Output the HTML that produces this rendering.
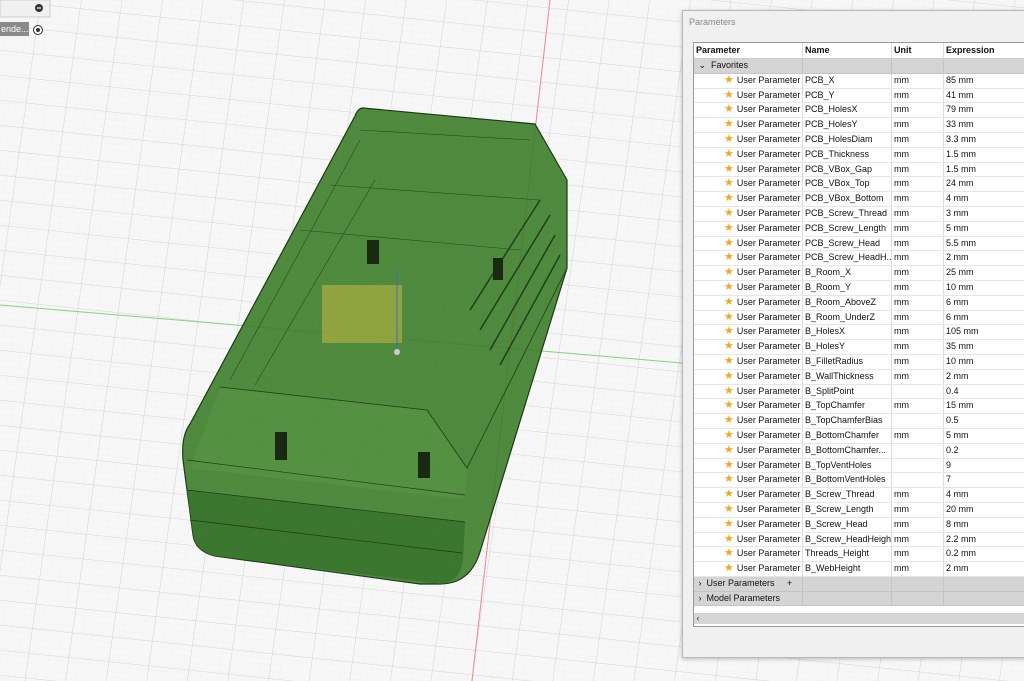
<!DOCTYPE html>
<html><head><meta charset="utf-8"><style>
body{margin:0;width:1024px;height:681px;overflow:hidden;background:#f4f4f4;font-family:"Liberation Sans",sans-serif;position:relative}
#bg{position:absolute;left:0;top:0}
.dlg{position:absolute;left:682px;top:10px;width:360px;height:646px;background:#f0f0f0;border:1px solid #b8b8b8;box-shadow:0 1px 4px rgba(0,0,0,.25)}
.title{position:absolute;left:6px;top:6px;font-size:9px;color:#888}
.tbl{position:absolute;left:10px;top:31px;width:360px;height:583px;background:#fff;border:1px solid #999;overflow:hidden}
.r{display:flex;height:14.8px;box-sizing:border-box;border-bottom:1px solid #e6e6e6;font-size:9px;color:#111;line-height:13.8px;white-space:nowrap}
.r>div{box-sizing:border-box;padding-left:2px;border-right:1px solid #ddd;overflow:hidden}
.c1{width:109px}.c2{width:89px}.c3{width:52px}.c4{flex:1}
.h{height:16px;font-weight:bold;line-height:15px;border-bottom:1px solid #ccc}
.g{background:#d4d4d4;border-color:#c4c4c4}
.g>div{border-color:#c4c4c4}
.st{color:#f5a623;font-size:11px;margin-left:28px;margin-right:3px}
.sb{position:absolute;left:0;top:570px;width:360px;height:11px;background:#d6d6d6;font-size:9px;color:#333;line-height:11px}
</style></head><body>
<svg id="bg" width="1024" height="681">
<defs>
<pattern id="gm" width="10" height="6" patternUnits="userSpaceOnUse" patternTransform="skewY(6) skewX(-8)">
<path d="M0 0H10M0 0V6" stroke="#ececec" stroke-width="0.5" fill="none"/></pattern>
<pattern id="gM" width="40" height="25" patternUnits="userSpaceOnUse" patternTransform="skewY(6) skewX(-8)">
<path d="M0 0H40M0 0V25" stroke="#d4d4d4" stroke-width="1" fill="none"/></pattern>
</defs>
<rect width="1024" height="681" fill="#f7f7f7"/>
<rect width="1024" height="681" fill="url(#gm)"/>
<rect width="1024" height="681" fill="url(#gM)"/>
<line x1="0" y1="305" x2="1024" y2="392" stroke="#7fd67f" stroke-width="1"/>
<line x1="550" y1="0" x2="472" y2="681" stroke="#e88" stroke-width="1"/>
<path d="M363,108 L535,124 L567,180 L567,268 L480,552 Q470,584 440,584 L420,584 L215,556 Q195,551 193,535 L183,460 Q181,436 190,424 L355,116 Q358,108 363,108 Z" fill="#3c7d2a" fill-opacity=".9" stroke="#1d3a14" stroke-width="1.2"/>
<path d="M220,387 L427,410 L467,468 L465,500 L190,468 Z" fill="#5a9845" opacity=".5"/>
<path d="M187,490 L465,522 L463,560 Q460,583 440,584 L215,556 Q195,551 193,535 Z" fill="#36722a" opacity=".8"/>
<path d="M220,387 L427,410 L467,468 L567,268" fill="none" stroke="#1d3a14" stroke-width=".8"/>
<path d="M187,460 L465,495 M187,490 L465,522 M190,520 L462,553" fill="none" stroke="#1d3a14" stroke-width=".7"/>
<path d="M300,230 L520,250 M330,185 L540,200 M360,130 L530,140 M230,380 L360,140 M255,385 L375,180" fill="none" stroke="#2a4d1e" stroke-width=".6"/>
<path d="M470,310 L540,200 M480,330 L550,215 M490,350 L555,235 M500,365 L560,255" stroke="#223f18" stroke-width="1.5"/>
<rect x="322" y="285" width="80" height="58" fill="#c8b840" opacity=".55"/>
<line x1="397" y1="270" x2="397" y2="352" stroke="#3a6fc8"/>
<circle cx="397" cy="352" r="3" fill="#ccc"/>
<rect x="367" y="240" width="12" height="24" fill="#1a2a12"/>
<rect x="493" y="258" width="10" height="22" fill="#1a2a12"/>
<rect x="275" y="432" width="12" height="28" fill="#1a2a12"/>
<rect x="418" y="452" width="12" height="26" fill="#1a2a12"/>
<rect x="0" y="0" width="50" height="17" fill="#f0f0f0" stroke="#ccc"/>
<circle cx="39" cy="8" r="4" fill="#333"/><rect x="37" y="7.4" width="4" height="1.2" fill="#fff"/>
<rect x="0" y="22" width="29" height="14" fill="#8a8a8a"/>
<text x="1" y="32" font-size="9" fill="#fff" font-family="Liberation Sans">ende...</text>
<circle cx="38" cy="30" r="4.5" fill="#fff" stroke="#333"/><circle cx="38" cy="30" r="2" fill="#333"/>
</svg>
<div class="dlg"><div class="title">Parameters</div>
<div class="tbl">
<div class="r h"><div class="c1">Parameter</div><div class="c2">Name</div><div class="c3">Unit</div><div class="c4">Expression</div></div>
<div class="r g"><div class="c1">&nbsp;⌄ &nbsp;Favorites</div><div class="c2"></div><div class="c3"></div><div class="c4"></div></div>
<div class="r"><div class="c1"><span class="st">★</span>User Parameter</div><div class="c2">PCB_X</div><div class="c3">mm</div><div class="c4">85 mm</div></div>
<div class="r"><div class="c1"><span class="st">★</span>User Parameter</div><div class="c2">PCB_Y</div><div class="c3">mm</div><div class="c4">41 mm</div></div>
<div class="r"><div class="c1"><span class="st">★</span>User Parameter</div><div class="c2">PCB_HolesX</div><div class="c3">mm</div><div class="c4">79 mm</div></div>
<div class="r"><div class="c1"><span class="st">★</span>User Parameter</div><div class="c2">PCB_HolesY</div><div class="c3">mm</div><div class="c4">33 mm</div></div>
<div class="r"><div class="c1"><span class="st">★</span>User Parameter</div><div class="c2">PCB_HolesDiam</div><div class="c3">mm</div><div class="c4">3.3 mm</div></div>
<div class="r"><div class="c1"><span class="st">★</span>User Parameter</div><div class="c2">PCB_Thickness</div><div class="c3">mm</div><div class="c4">1.5 mm</div></div>
<div class="r"><div class="c1"><span class="st">★</span>User Parameter</div><div class="c2">PCB_VBox_Gap</div><div class="c3">mm</div><div class="c4">1.5 mm</div></div>
<div class="r"><div class="c1"><span class="st">★</span>User Parameter</div><div class="c2">PCB_VBox_Top</div><div class="c3">mm</div><div class="c4">24 mm</div></div>
<div class="r"><div class="c1"><span class="st">★</span>User Parameter</div><div class="c2">PCB_VBox_Bottom</div><div class="c3">mm</div><div class="c4">4 mm</div></div>
<div class="r"><div class="c1"><span class="st">★</span>User Parameter</div><div class="c2">PCB_Screw_Thread</div><div class="c3">mm</div><div class="c4">3 mm</div></div>
<div class="r"><div class="c1"><span class="st">★</span>User Parameter</div><div class="c2">PCB_Screw_Length</div><div class="c3">mm</div><div class="c4">5 mm</div></div>
<div class="r"><div class="c1"><span class="st">★</span>User Parameter</div><div class="c2">PCB_Screw_Head</div><div class="c3">mm</div><div class="c4">5.5 mm</div></div>
<div class="r"><div class="c1"><span class="st">★</span>User Parameter</div><div class="c2">PCB_Screw_HeadH...</div><div class="c3">mm</div><div class="c4">2 mm</div></div>
<div class="r"><div class="c1"><span class="st">★</span>User Parameter</div><div class="c2">B_Room_X</div><div class="c3">mm</div><div class="c4">25 mm</div></div>
<div class="r"><div class="c1"><span class="st">★</span>User Parameter</div><div class="c2">B_Room_Y</div><div class="c3">mm</div><div class="c4">10 mm</div></div>
<div class="r"><div class="c1"><span class="st">★</span>User Parameter</div><div class="c2">B_Room_AboveZ</div><div class="c3">mm</div><div class="c4">6 mm</div></div>
<div class="r"><div class="c1"><span class="st">★</span>User Parameter</div><div class="c2">B_Room_UnderZ</div><div class="c3">mm</div><div class="c4">6 mm</div></div>
<div class="r"><div class="c1"><span class="st">★</span>User Parameter</div><div class="c2">B_HolesX</div><div class="c3">mm</div><div class="c4">105 mm</div></div>
<div class="r"><div class="c1"><span class="st">★</span>User Parameter</div><div class="c2">B_HolesY</div><div class="c3">mm</div><div class="c4">35 mm</div></div>
<div class="r"><div class="c1"><span class="st">★</span>User Parameter</div><div class="c2">B_FilletRadius</div><div class="c3">mm</div><div class="c4">10 mm</div></div>
<div class="r"><div class="c1"><span class="st">★</span>User Parameter</div><div class="c2">B_WallThickness</div><div class="c3">mm</div><div class="c4">2 mm</div></div>
<div class="r"><div class="c1"><span class="st">★</span>User Parameter</div><div class="c2">B_SplitPoint</div><div class="c3"></div><div class="c4">0.4</div></div>
<div class="r"><div class="c1"><span class="st">★</span>User Parameter</div><div class="c2">B_TopChamfer</div><div class="c3">mm</div><div class="c4">15 mm</div></div>
<div class="r"><div class="c1"><span class="st">★</span>User Parameter</div><div class="c2">B_TopChamferBias</div><div class="c3"></div><div class="c4">0.5</div></div>
<div class="r"><div class="c1"><span class="st">★</span>User Parameter</div><div class="c2">B_BottomChamfer</div><div class="c3">mm</div><div class="c4">5 mm</div></div>
<div class="r"><div class="c1"><span class="st">★</span>User Parameter</div><div class="c2">B_BottomChamfer...</div><div class="c3"></div><div class="c4">0.2</div></div>
<div class="r"><div class="c1"><span class="st">★</span>User Parameter</div><div class="c2">B_TopVentHoles</div><div class="c3"></div><div class="c4">9</div></div>
<div class="r"><div class="c1"><span class="st">★</span>User Parameter</div><div class="c2">B_BottomVentHoles</div><div class="c3"></div><div class="c4">7</div></div>
<div class="r"><div class="c1"><span class="st">★</span>User Parameter</div><div class="c2">B_Screw_Thread</div><div class="c3">mm</div><div class="c4">4 mm</div></div>
<div class="r"><div class="c1"><span class="st">★</span>User Parameter</div><div class="c2">B_Screw_Length</div><div class="c3">mm</div><div class="c4">20 mm</div></div>
<div class="r"><div class="c1"><span class="st">★</span>User Parameter</div><div class="c2">B_Screw_Head</div><div class="c3">mm</div><div class="c4">8 mm</div></div>
<div class="r"><div class="c1"><span class="st">★</span>User Parameter</div><div class="c2">B_Screw_HeadHeight</div><div class="c3">mm</div><div class="c4">2.2 mm</div></div>
<div class="r"><div class="c1"><span class="st">★</span>User Parameter</div><div class="c2">Threads_Height</div><div class="c3">mm</div><div class="c4">0.2 mm</div></div>
<div class="r"><div class="c1"><span class="st">★</span>User Parameter</div><div class="c2">B_WebHeight</div><div class="c3">mm</div><div class="c4">2 mm</div></div>
<div class="r g"><div class="c1">&nbsp;› &nbsp;User Parameters &nbsp;&nbsp;&nbsp;&nbsp;+</div><div class="c2"></div><div class="c3"></div><div class="c4"></div></div>
<div class="r g"><div class="c1">&nbsp;› &nbsp;Model Parameters</div><div class="c2"></div><div class="c3"></div><div class="c4"></div></div>
<div class="sb">&nbsp;‹</div>
</div></div>
</body></html>
